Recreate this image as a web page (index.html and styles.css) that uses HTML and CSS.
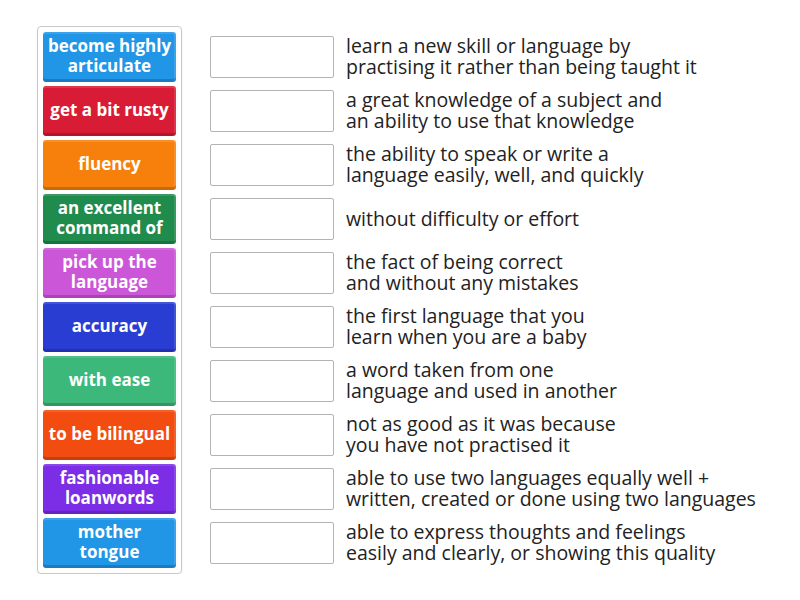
FILE: index.html
```html
<!DOCTYPE html>
<html>
<head>
<meta charset="utf-8">
<link rel="stylesheet" href="styles.css">
</head>
<body>
<div class="page">
  <div class="panel">
    <div class="tile c1">become highly articulate</div>
    <div class="tile c2">get a bit rusty</div>
    <div class="tile c3">fluency</div>
    <div class="tile c4">an excellent command of</div>
    <div class="tile c5">pick up the language</div>
    <div class="tile c6">accuracy</div>
    <div class="tile c7">with ease</div>
    <div class="tile c8">to be bilingual</div>
    <div class="tile c9">fashionable loanwords</div>
    <div class="tile c10">mother tongue</div>
  </div>
  <div class="rows">
    <div class="row"><div class="box"></div><div class="def">learn a new skill or language by<br>practising it rather than being taught it</div></div>
    <div class="row"><div class="box"></div><div class="def">a great knowledge of a subject and<br>an ability to use that knowledge</div></div>
    <div class="row"><div class="box"></div><div class="def">the ability to speak or write a<br>language easily, well, and quickly</div></div>
    <div class="row"><div class="box"></div><div class="def">without difficulty or effort</div></div>
    <div class="row"><div class="box"></div><div class="def">the fact of being correct<br>and without any mistakes</div></div>
    <div class="row"><div class="box"></div><div class="def">the first language that you<br>learn when you are a baby</div></div>
    <div class="row"><div class="box"></div><div class="def">a word taken from one<br>language and used in another</div></div>
    <div class="row"><div class="box"></div><div class="def">not as good as it was because<br>you have not practised it</div></div>
    <div class="row"><div class="box"></div><div class="def">able to use two languages equally well +<br>written, created or done using two languages</div></div>
    <div class="row"><div class="box"></div><div class="def">able to express thoughts and feelings<br>easily and clearly, or showing this quality</div></div>
  </div>
</div>
</body>
</html>
```

FILE: styles.css
```css
html, body {
  margin: 0;
  padding: 0;
  background: #ffffff;
}
.page {
  display: flex;
  align-items: flex-start;
  padding: 26px 0 0 37px;
  font-family: "Open Sans", "DejaVu Sans", sans-serif;
}
.panel {
  display: flex;
  flex-direction: column;
  gap: 4px;
  padding: 5px;
  border: 1px solid #c8c8c8;
  border-radius: 4px;
  box-shadow: 0 1px 2px rgba(0,0,0,0.08);
}
.tile {
  box-sizing: border-box;
  width: 133px;
  height: 50px;
  border-radius: 3px;
  display: flex;
  align-items: center;
  justify-content: center;
  text-align: center;
  color: #ffffff;
  font-weight: 700;
  font-size: 17px;
  line-height: 20px;
  padding: 0 3px 3px;
  box-shadow: inset 0 -3px 0 rgba(0,0,0,0.18), inset -2px 0 0 rgba(255,255,255,0.12), inset 0 2px 0 rgba(255,255,255,0.12);
}
.c1 { background: #2196e6; }
.c2 { background: #d91c35; }
.c3 { background: #f7800c; }
.c4 { background: #1f8b4c; }
.c5 { background: #cc56d8; }
.c6 { background: #2a3dd2; }
.c7 { background: #3cb87a; }
.c8 { background: #f24c10; }
.c9 { background: #7c2ee6; }
.c10 { background: #2196e6; }
.rows {
  display: flex;
  flex-direction: column;
  gap: 4px;
  margin-left: 28px;
  padding-top: 6px;
}
.row {
  height: 50px;
  display: flex;
  align-items: center;
}
.box {
  box-sizing: border-box;
  width: 124px;
  height: 42px;
  border: 1px solid #b4b4b4;
  border-radius: 2px;
  background: #ffffff;
  flex: none;
}
.def {
  margin-left: 12px;
  margin-bottom: 2px;
  font-size: 19.5px;
  line-height: 21px;
  color: #222222;
  white-space: nowrap;
}
```
